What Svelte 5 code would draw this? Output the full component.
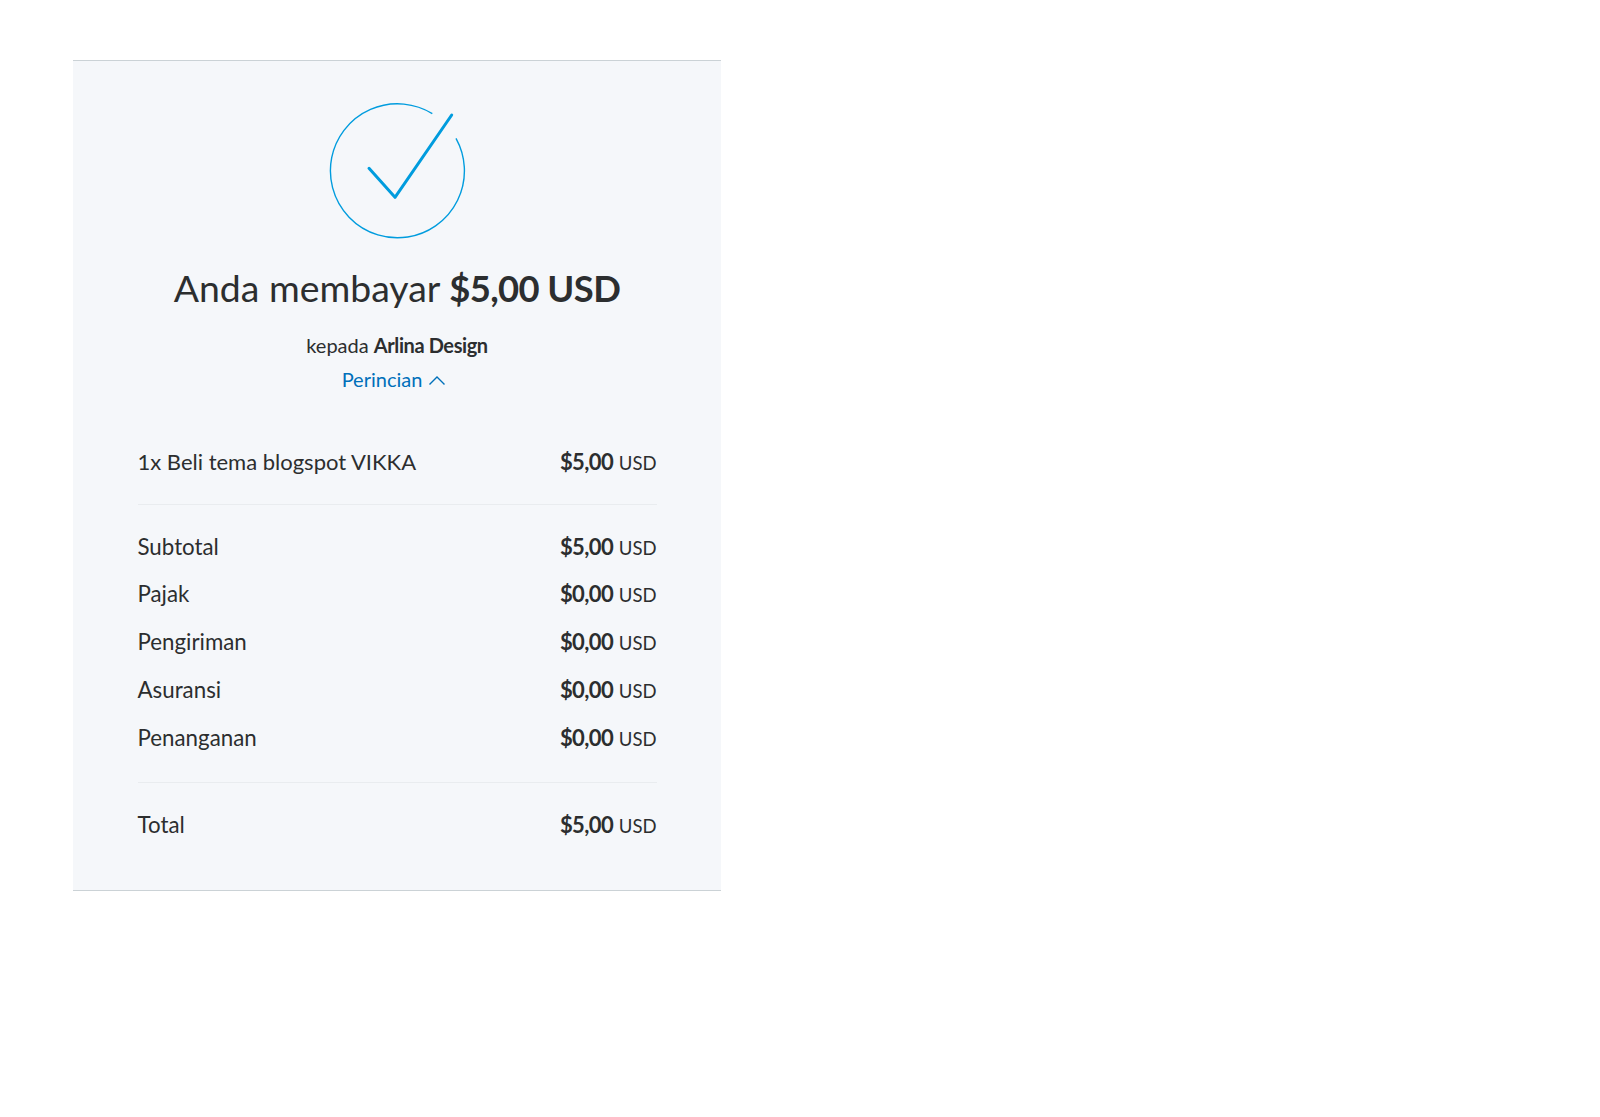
<script lang="ts">
	const items = [{ label: '1x Beli tema blogspot VIKKA', amount: '$5,00' }];
	const charges = [
		{ label: 'Subtotal', amount: '$5,00' },
		{ label: 'Pajak', amount: '$0,00' },
		{ label: 'Pengiriman', amount: '$0,00' },
		{ label: 'Asuransi', amount: '$0,00' },
		{ label: 'Penanganan', amount: '$0,00' }
	];
</script>

{#snippet row(label: string, amount: string)}
	<div class="row">
		<span class="label">{label}</span>
		<span class="price"><b>{amount}</b> <span class="cur">USD</span></span>
	</div>
{/snippet}

<main class="card">
	<svg class="check" width="140" height="140" viewBox="0 0 140 140" aria-hidden="true">
		<path class="ring" d="M105.3 13.6A67 67 0 1 0 129 38.3" />
		<path class="tick" d="M42 68.3L68 97.3L124.7 15" />
	</svg>
	<h1>Anda membayar <strong>$5,00 USD</strong></h1>
	<p class="payee">kepada <strong>Arlina Design</strong></p>
	<button class="toggle">
		Perincian
		<svg width="16" height="9" viewBox="0 0 16 9" aria-hidden="true"><path d="M.5 8.5L8 1l7.5 7.5" /></svg>
	</button>

	<section class="rows items">
		{#each items as item}
			{@render row(item.label, item.amount)}
		{/each}
	</section>
	<section class="rows charges">
		{#each charges as item}
			{@render row(item.label, item.amount)}
		{/each}
	</section>
	<section class="rows total">
		{@render row('Total', '$5,00')}
	</section>
</main>

<style>
	:global(body) {
		margin: 0;
		background: #fff;
	}

	.card {
		box-sizing: border-box;
		width: 648px;
		height: 831px;
		margin: 60px 0 0 73px;
		padding: 39px 64px 0;
		display: flex;
		flex-direction: column;
		align-items: center;
		background: #f5f7fa;
		border-top: 1px solid #cbd2d6;
		border-bottom: 1px solid #cbd2d6;
		color: #2c2e2f;
		font-family: Lato, 'Open Sans', sans-serif;
	}

	.check {
		display: block;
		flex-shrink: 0;
	}

	.ring {
		fill: none;
		stroke: #009cde;
		stroke-width: 1.4;
	}

	.tick {
		fill: none;
		stroke: #009cde;
		stroke-width: 3;
		stroke-linecap: round;
		stroke-linejoin: round;
	}

	h1 {
		margin: 25px 0 0;
		font-size: 37.4px;
		line-height: 46px;
		font-weight: 400;
		white-space: nowrap;
	}

	h1 strong {
		font-size: 36.4px;
		font-weight: 700;
		letter-spacing: -0.6px;
	}

	.payee {
		margin: 20px 0 0;
		font-size: 20px;
		line-height: 28px;
	}

	.payee strong {
		font-weight: 700;
		letter-spacing: -0.4px;
	}

	.toggle {
		margin-top: 6px;
		padding: 0 7px 0 0;
		display: flex;
		align-items: center;
		gap: 7px;
		background: none;
		border: none;
		color: #0070ba;
		font: inherit;
		font-size: 20px;
		line-height: 28px;
		cursor: pointer;
	}

	.toggle svg {
		margin-top: 2px;
	}

	.toggle path {
		fill: none;
		stroke: currentColor;
		stroke-width: 1.4;
	}

	.rows {
		width: 519px;
		display: flex;
		flex-direction: column;
		gap: 18.9px;
		font-size: 22px;
		line-height: 28px;
	}

	.items {
		margin-top: 54.5px;
		padding-bottom: 27px;
		border-bottom: 1px solid #e9ecef;
	}

	.charges {
		margin-top: 28px;
		padding-bottom: 29px;
		border-bottom: 1px solid #e9ecef;
	}

	.total {
		margin-top: 28px;
	}

	.row {
		display: flex;
		justify-content: space-between;
		align-items: baseline;
	}

	.charges .label,
	.total .label {
		font-size: 22.3px;
	}

	.price b {
		font-weight: 700;
		letter-spacing: -0.6px;
	}

	.cur {
		font-size: 18.5px;
	}
</style>
